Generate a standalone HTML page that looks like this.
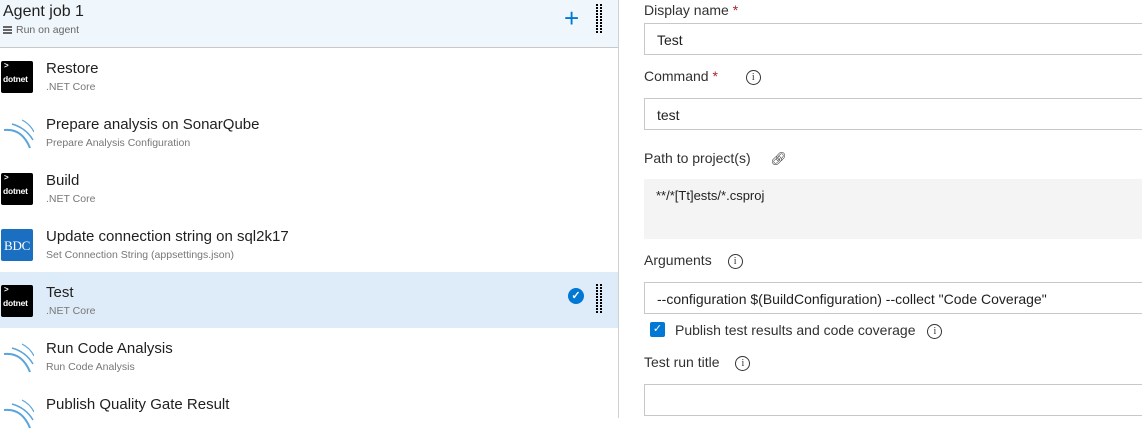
<!DOCTYPE html>
<html><head><style>
body{margin:0;width:1142px;height:418px;overflow:hidden;background:#fff;font-family:"Segoe UI","Liberation Sans",sans-serif;color:#201f1e;position:relative}
.abs{position:absolute}
.left{left:0;top:0;width:618px;height:418px;border-right:1px solid #d0d0d0}
.hdr{left:0;top:0;width:618px;height:47px;background:#eff6fc;border-bottom:1px solid #c8c8c8}
.row{position:absolute;left:0;width:618px;height:56px}
.row .t{position:absolute;left:46px;top:12px;font-size:15px;color:#201f1e}
.row .s{position:absolute;left:46px;top:33px;font-size:10.5px;color:#777}
.dn{position:absolute;left:1px;top:13px;width:32px;height:32px;background:#000;border-radius:2px;color:#fff;font-size:8.5px;font-weight:bold}
.dn span{position:absolute;left:2px;top:13px;letter-spacing:-.2px}
.dn i{position:absolute;left:3px;top:0;font-style:normal;font-size:8px}
.lbl{position:absolute;left:644px;font-size:14px;color:#323130}
.inp{position:absolute;left:644px;width:500px;height:32px;border:1px solid #c8c8c8;font-size:14px;box-sizing:border-box;padding:8px 12px}
.req{color:#a4262c}
.info{display:inline-block;width:13px;height:13px;border:1.3px solid #333;border-radius:50%;font-size:10px;line-height:13px;text-align:center;font-family:"Liberation Serif",serif;vertical-align:1px}
</style></head><body>
<svg width="0" height="0" style="position:absolute"><defs><pattern id="g" width="4" height="3" patternUnits="userSpaceOnUse"><rect width="2" height="2" fill="#000"/></pattern></defs></svg>
<div class="abs left"></div>
<div class="abs hdr"></div>
<div class="abs" style="left:3px;top:3px;font-size:16px">Agent job 1</div>
<div class="abs" style="left:3px;top:24px;font-size:10.5px;color:#666"><span style="display:inline-block;width:9px;height:8px;border-top:2px solid #666;border-bottom:2px solid #666;box-sizing:border-box;background:linear-gradient(#666 0 0) center/100% 2px no-repeat;vertical-align:-1px;margin-right:4px"></span>Run on agent</div>
<div class="abs" style="left:564px;top:6px;font-size:26px;color:#0078d4;font-weight:300;line-height:24px">+</div>
<svg class="abs" style="left:596px;top:4px" width="6" height="29"><rect width="6" height="29" fill="url(#g)"/></svg>

<div class="row" style="top:48px"><div class="dn"><i>&gt;</i><span>dotnet</span></div><div class="t">Restore</div><div class="s">.NET Core</div></div>
<div class="row" style="top:104px"><svg class="abs" style="left:2px;top:12px" width="32" height="34"><g fill="none" stroke="#5ba4dc" stroke-width="2"><path d="M2 14 Q20 12 28 32"/><path d="M10 8 Q24 12 31 24" stroke-width="1.5"/><path d="M20 4 Q28 8 32 16" stroke-width="1.2"/></g></svg><div class="t">Prepare analysis on SonarQube</div><div class="s">Prepare Analysis Configuration</div></div>
<div class="row" style="top:160px"><div class="dn"><i>&gt;</i><span>dotnet</span></div><div class="t">Build</div><div class="s">.NET Core</div></div>
<div class="row" style="top:216px"><div class="dn" style="background:#1a6fc0;font-family:'Liberation Serif',serif;font-weight:normal;font-size:13px"><span style="left:3px;top:9px">BDC</span></div><div class="t">Update connection string on sql2k17</div><div class="s">Set Connection String (appsettings.json)</div></div>
<div class="row" style="top:272px;background:#deecf9"><div class="dn"><i>&gt;</i><span>dotnet</span></div><div class="t">Test</div><div class="s">.NET Core</div>
<div class="abs" style="left:568px;top:16px;width:16px;height:16px;border-radius:50%;background:#0078d4;color:#fff;font-size:11px;text-align:center;line-height:16px;font-weight:bold">✓</div>
<svg class="abs" style="left:596px;top:12px" width="6" height="29"><rect width="6" height="29" fill="url(#g)"/></svg></div>
<div class="row" style="top:328px"><svg class="abs" style="left:2px;top:12px" width="32" height="34"><g fill="none" stroke="#5ba4dc" stroke-width="2"><path d="M2 14 Q20 12 28 32"/><path d="M10 8 Q24 12 31 24" stroke-width="1.5"/><path d="M20 4 Q28 8 32 16" stroke-width="1.2"/></g></svg><div class="t">Run Code Analysis</div><div class="s">Run Code Analysis</div></div>
<div class="row" style="top:384px"><svg class="abs" style="left:2px;top:12px" width="32" height="34"><g fill="none" stroke="#5ba4dc" stroke-width="2"><path d="M2 14 Q20 12 28 32"/><path d="M10 8 Q24 12 31 24" stroke-width="1.5"/><path d="M20 4 Q28 8 32 16" stroke-width="1.2"/></g></svg><div class="t">Publish Quality Gate Result</div></div>

<div class="lbl" style="top:2px">Display name <span class="req">*</span></div>
<div class="inp" style="top:23px">Test</div>
<div class="lbl" style="top:68px">Command <span class="req">*</span> <span class="info" style="margin-left:24px">i</span></div>
<div class="inp" style="top:98px">test</div>
<div class="lbl" style="top:150px">Path to project(s) <span style="margin-left:16px;font-size:13px">🔗︎</span></div>
<div class="abs" style="left:644px;top:179px;width:500px;height:60px;background:#f4f4f4;font-size:13px;padding:9px 12px;box-sizing:border-box">**/*[Tt]ests/*.csproj</div>
<div class="lbl" style="top:252px">Arguments <span class="info" style="margin-left:12px">i</span></div>
<div class="inp" style="top:282px">--configuration $(BuildConfiguration) --collect "Code Coverage"</div>
<div class="abs" style="left:650px;top:322px;width:15px;height:15px;background:#0078d4;border-radius:2px;color:#fff;font-size:11px;text-align:center;line-height:15px">✓</div>
<div class="lbl" style="left:675px;top:322px">Publish test results and code coverage <span class="info" style="margin-left:8px">i</span></div>
<div class="lbl" style="top:354px">Test run title <span class="info" style="margin-left:12px">i</span></div>
<div class="inp" style="top:384px;height:32px"></div>
</body></html>
